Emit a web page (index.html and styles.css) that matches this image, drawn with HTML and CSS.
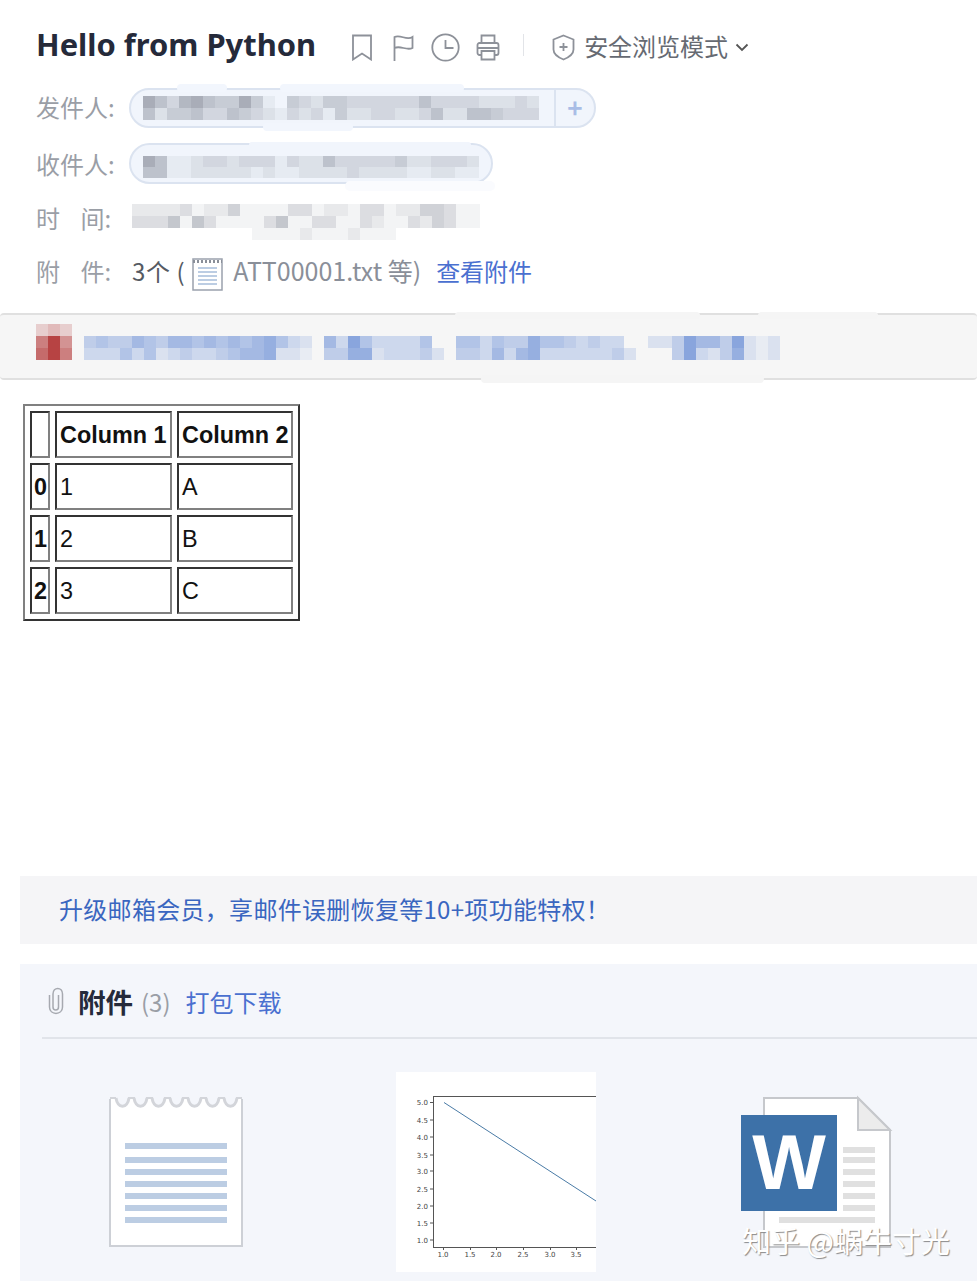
FILE: index.html
```html
<!DOCTYPE html>
<html lang="zh-CN">
<head>
<meta charset="utf-8">
<title>Hello from Python</title>
<link rel="stylesheet" href="styles.css">
</head>
<body>
<header class="head">
  <div class="title-row">
    <h1 class="title">Hello from Python</h1>
    <svg class="ic ic-book" width="20" height="27" viewBox="0 0 20 27"><path d="M1 1.500h18v24l-9-6-9 6z"/></svg>
    <svg class="ic ic-flag" width="21" height="27" viewBox="0 0 21 27"><path d="M1.500 27V3c6-3 12 4 18 0v11c-6 3-12-3-18 0"/></svg>
    <svg class="ic ic-clock" width="29" height="29" viewBox="0 0 29 29"><circle cx="14.500" cy="14.500" r="13.200"/><path d="M14.500 7v8h8"/></svg>
    <svg class="ic ic-print" width="24" height="27" viewBox="0 0 24 27"><path d="M5.500 9V1.500h13V9M5.500 21H3.500a2 2 0 0 1-2-2V11a2 2 0 0 1 2-2h17a2 2 0 0 1 2 2v8a2 2 0 0 1-2 2h-2M1.500 14h21M5.500 17v8.500h13V17z"/></svg>
    <span class="sep"></span>
    <svg class="ic ic-shield" width="23" height="27" viewBox="0 0 23 27"><path d="M11.500 1.500l10 4v10c0 5-5 8-10 10-5-2-10-5-10-10v-10zM11.500 9v8M7.500 13h8"/></svg>
    <span class="safe">安全浏览模式</span>
    <svg class="ic ic-chev" width="14" height="9" viewBox="0 0 14 9"><path d="M1.500 1.500L7 7l5.500-5.500"/></svg>
  </div>
  <div class="row row-from">
    <span class="label">发件人:</span>
    <div class="pill pill-from">
      <span class="smudge sm-f1"></span>
      <span class="smudge sm-f2"></span>
      <span class="smudge sm-f3"></span>
      <div class="mosaic m-from" data-base="138,143,155" data-rows="753675447410432443333335333322232|524453354321323142233223522554333"></div>
      <span class="pill-add">+</span>
    </div>
  </div>
  <div class="row row-to">
    <span class="label">收件人:</span>
    <div class="pill pill-to">
      <span class="smudge sm-t1"></span>
      <span class="smudge sm-t2"></span>
      <div class="mosaic m-to" data-base="138,143,155" data-rows="7511233233313225333334223332|5511222221211222232222112211"></div>
    </div>
  </div>
  <div class="row row-time">
    <span class="label label-wide">时 间:</span>
    <div class="mosaic m-time" data-base="138,143,155" data-rows="22223122411113312213312244311|33351531111351133113211324311|00000000001111211121110000000"></div>
  </div>
  <div class="row row-att">
    <span class="label label-wide">附 件:</span>
    <span class="att-count">3个 (</span>
    <svg class="att-note" width="31" height="34" viewBox="0 0 31 34"><rect x="1" y="2" width="29" height="31" fill="#fff" stroke="#9aa1ad" stroke-width="1.500"/><path d="M1 4.500h29" stroke="#8a8f99" stroke-width="3" stroke-dasharray="2 2"/><path d="M6 11h19M6 15h19M6 19h19M6 23h19M6 27h19" stroke="#bccde3" stroke-width="2"/></svg>
    <span class="att-name">ATT00001.txt 等)</span>
    <a class="att-link">查看附件</a>
  </div>
</header>

<div class="subject">
  <span class="smudge sm-s1"></span>
  <span class="smudge sm-s2"></span>
  <span class="smudge sm-s3"></span>
  <div class="mosaic m-avatar" data-base="176,48,48" data-rows="232|695|796"></div>
  <div class="mosaic m-subject" data-base="110,145,215" data-rows="4544654665656567532 0 6385333350 0 553544755434330 0 22486648212|3335352343345667221 0 4477233342 0 443636733333342 0 00483247212"></div>
</div>

<div class="mail-body">
  <table class="frame">
    <thead>
      <tr><th class="c0"></th><th class="c1">Column 1</th><th class="c2">Column 2</th></tr>
    </thead>
    <tbody>
      <tr><th>0</th><td>1</td><td>A</td></tr>
      <tr><th>1</th><td>2</td><td>B</td></tr>
      <tr><th>2</th><td>3</td><td>C</td></tr>
    </tbody>
  </table>
</div>

<div class="promo">升级邮箱会员，享邮件误删恢复等10+项功能特权！</div>

<section class="attach">
  <div class="attach-head">
    <svg class="clip" width="16" height="28" viewBox="0 0 16 28"><path d="M1.500 8v12c0 8.500 13 8.500 13 0V7c0-7.500-9.500-7.500-9.500 0v13c0 4 5.500 4 5.500 0V8"/></svg>
    <strong class="attach-title">附件</strong>
    <span class="attach-num">(3)</span>
    <a class="attach-link">打包下载</a>
  </div>
  <div class="thumbs">
    <svg class="thumb" width="200" height="200" viewBox="0 0 200 200">
      <rect x="34" y="26" width="132" height="148" fill="#fff" stroke="#cdd0d6" stroke-width="2"/>
      <path d="M33 26h134" stroke="#f4f6fb" stroke-width="2"/>
      <path d="M34 26h6M52 26h7M70 26h7M88 26h7M106 26h7M124 26h7M142 26h7M160 26h6" stroke="#d3d5da" stroke-width="2"/>
      <path d="M40 26a6.700 11 0 0 0 13 0M58 26a6.700 11 0 0 0 13 0M76 26a6.700 11 0 0 0 13 0M94 26a6.700 11 0 0 0 13 0M112 26a6.700 11 0 0 0 13 0M130 26a6.700 11 0 0 0 13 0M148 26a6.700 11 0 0 0 13 0" fill="#f4f6fb" stroke="#d3d5da" stroke-width="3"/>
      <path d="M49 74h102M49 88h102M49 100h102M49 112h102M49 124h102M49 136h102M49 148h102" stroke="#bccde3" stroke-width="6"/>
    </svg>
    <svg class="thumb chart" width="200" height="200" viewBox="0 0 200 200">
      <rect width="200" height="200" fill="#fff"/>
      <path d="M37 24.500h163M37.500 24v151M37 175.500h163" fill="none" stroke="#555" stroke-width="1"/>
      <path d="M48 30.500L200 129" fill="none" stroke="#4a7ba6" stroke-width="1"/>
      <path class="tick" d="M34 30.500h3M34 48h3M34 65h3M34 83h3M34 99h3M34 117h3M34 134h3M34 151h3M34 168h3M47.500 175v3M74.500 175v3M100.500 175v3M127.500 175v3M154.500 175v3M180.500 175v3"/>
      <g class="yl"><text x="32" y="33">5.0</text><text x="32" y="51">4.5</text><text x="32" y="68">4.0</text><text x="32" y="86">3.5</text><text x="32" y="102">3.0</text><text x="32" y="120">2.5</text><text x="32" y="137">2.0</text><text x="32" y="154">1.5</text><text x="32" y="171">1.0</text></g>
      <g class="xl"><text x="47" y="185">1.0</text><text x="74" y="185">1.5</text><text x="100" y="185">2.0</text><text x="127" y="185">2.5</text><text x="154" y="185">3.0</text><text x="180" y="185">3.5</text></g>
    </svg>
    <svg class="thumb" width="200" height="200" viewBox="0 0 200 200">
      <path d="M48 26h94l32 32v117H48z" fill="#fff" stroke="#c6c8cc" stroke-width="2"/>
      <path d="M142 26l32 32h-32z" fill="#ececec" stroke="#c6c8cc" stroke-width="2"/>
      <path d="M127 78h32M127 88h32M127 100h32M127 112h32M127 124h32M127 136h32M63 148h96" stroke="#e0e0e0" stroke-width="6"/>
      <rect x="25" y="43" width="96" height="96" fill="#3d71a8"/>
      <text class="word-w" x="73" y="117">W</text>
    </svg>
  </div>
</section>
<div class="mark">知乎 @蜗牛寸光</div>
<script src="mosaic.js"></script>
</body>
</html>
```
FILE: styles.css
```css
* { box-sizing: border-box; }
html, body { margin: 0; height: 1281px; overflow: hidden; background: #fff; }
body { position: relative; font-family: "Noto Sans CJK SC", "Noto Sans", sans-serif; font-size: 24px; color: #555; }

.head { padding: 22px 0 0 36px; }
.title-row { display: flex; align-items: center; height: 46px; }
.title { margin: 0 36px 0 0; padding-bottom: 2px; font-family: "Noto Sans", sans-serif; font-size: 30.900px; font-weight: 700; color: #252a3a; line-height: 46px; white-space: nowrap; }
.ic { flex: none; fill: none; stroke: #8d9199; stroke-width: 1.800; margin-top: 4px; }
.ic-flag { margin-left: 21px; }
.ic-clock { margin-left: 17px; margin-top: 5px; }
.ic-print { margin-left: 16px; }
.sep { width: 1px; height: 22px; background: #e2e4e8; margin: 0 28px 0 23px; }
.ic-shield { margin-right: 9px; }
.safe { color: #666a72; line-height: 46px; padding-top: 2px; }
.ic-chev { margin-left: 7px; stroke: #555; }

.row { display: flex; align-items: center; }
.row-from { height: 40px; margin-top: 20px; }
.row-to { height: 41px; margin-top: 15px; }
.row-time { height: 32px; margin-top: 19px; }
.row-att { height: 32px; margin-top: 21px; }
.label { width: 93px; flex: none; color: #9a9ea6; white-space: nowrap; padding-bottom: 4px; }
.row-to .label { padding-bottom: 0; }
.label-wide { word-spacing: 15px; width: 96px; }
.pill { position: relative; display: flex; align-items: stretch; height: 100%; background: #f1f5fc; border: 2px solid #dbe3f0; border-radius: 21px; }
.pill-from { width: 467px; }
.pill-to { width: 364px; }
.pill-add { margin-left: auto; width: 40px; border-left: 2px solid #dbe3f0; color: #a9bde6; text-align: center; font-size: 26px; line-height: 34px; font-weight: 700; }

.smudge { position: absolute; border-radius: 6px; }
.sm-f1 { left: 46px; top: -6px; width: 50px; height: 8px; background: #f2f6fd; }
.sm-f2 { left: 149px; top: -6px; width: 184px; height: 8px; background: #f2f6fd; }
.sm-f3 { left: 132px; bottom: -5px; width: 90px; height: 8px; background: #f2f6fd; }
.sm-t1 { left: 118px; top: -3px; width: 222px; height: 6px; background: #f1f5fc; }
.sm-t2 { left: 214px; bottom: -9px; width: 150px; height: 10px; background: #fafbfe; }
.sm-s1 { left: 455px; top: -3px; width: 245px; height: 7px; background: #f5f5f5; }
.sm-s2 { left: 758px; top: -3px; width: 120px; height: 7px; background: #f5f5f5; }
.sm-s3 { left: 481px; bottom: -5px; width: 283px; height: 8px; background: #f5f5f5; }

.mosaic { display: grid; grid-auto-rows: 12px; grid-auto-columns: 12px; }
.m-from { position: absolute; left: 12px; top: 6px; }
.m-to { position: absolute; left: 12px; top: 11px; grid-auto-rows: 11px; }
.m-time { margin-top: 6px; }
.m-avatar { flex: none; }
.m-subject { flex: none; margin: 12px 0 0 12px; }

.att-count { color: #555a62; margin-right: 7px; white-space: nowrap; padding-bottom: 4px; letter-spacing: .6px; }
.att-note { flex: none; margin: 3px 10px 0 0; }
.att-name { color: #8a8f99; font-size: 25px; white-space: nowrap; margin-right: 15px; padding-bottom: 4px; }
.att-link { padding-bottom: 4px; }
.att-link, .attach-link { color: #4a70d0; white-space: nowrap; }

.subject { position: relative; display: flex; height: 67px; margin-top: 25px; padding: 9px 0 0 36px; background: #f6f6f6; border-top: 2px solid #e0e0e0; border-bottom: 2px solid #e0e0e0; border-radius: 4px; }

.mail-body { height: 496px; padding: 24px 0 0 23px; }
.frame { border-collapse: separate; border-spacing: 5px; border: 2px solid; border-color: #808080 #333 #333 #808080; font-family: "Liberation Sans", Arial, sans-serif; font-size: 23.400px; color: #111; }
.frame th, .frame td { height: 47px; padding: 2px 1px 0 3px; border: 2px solid; border-color: #333 #808080 #808080 #333; text-align: left; font-weight: 400; white-space: nowrap; }
.frame th { font-weight: 700; }
.frame th:first-child { padding: 2px 1px 0 2px; }
.frame .c0 { width: 20px; }
.frame .c1 { width: 117px; }
.frame .c2 { width: 116px; }

.promo { height: 68px; margin-left: 20px; padding-left: 39px; background: #f5f5f7; color: #3a66c0; line-height: 66px; letter-spacing: .3px; white-space: nowrap; }

.attach { height: 317px; margin: 20px 0 0 20px; padding: 0 0 0 22px; background: #f4f6fb; }
.attach-head { display: flex; align-items: center; height: 75px; border-bottom: 2px solid #e1e4ea; padding-left: 6px; }
.clip { flex: none; fill: none; stroke: #a6a9b0; stroke-width: 1.500; margin-right: 14px; }
.attach-title { font-size: 27.500px; font-weight: 700; color: #252a3a; }
.attach-num { color: #9a9ea6; margin: 2px 15px 0 8px; }
.attach-link { margin-top: 2px; }
.thumbs { display: flex; gap: 120px; margin: 33px 0 0 34px; }
.thumb { flex: none; }
.tick { stroke: #555; stroke-width: 1; fill: none; }
.yl text, .xl text { font-family: "DejaVu Sans", sans-serif; font-size: 7px; fill: #444; }
.yl text { text-anchor: end; }
.xl text { text-anchor: middle; }
.word-w { font-family: "Liberation Sans", Arial, sans-serif; font-weight: 700; font-size: 78px; fill: #fff; text-anchor: middle; }

.mark { position: absolute; left: 742px; top: 1220px; font-size: 29px; line-height: 40px; color: #fff; text-shadow: 1px 1px 1px #8a8a8a; white-space: nowrap; }
```
FILE: mosaic.js
```js
document.querySelectorAll('.mosaic').forEach(function (box) {
  var base = box.dataset.base;
  box.dataset.rows.split('|').forEach(function (row, y) {
    row.replace(/ /g, '').split('').forEach(function (digit, x) {
      var cell = document.createElement('i');
      cell.style.gridArea = (y + 1) + ' / ' + (x + 1);
      cell.style.background = 'rgba(' + base + ',' + digit / 10 + ')';
      box.appendChild(cell);
    });
  });
});
```
